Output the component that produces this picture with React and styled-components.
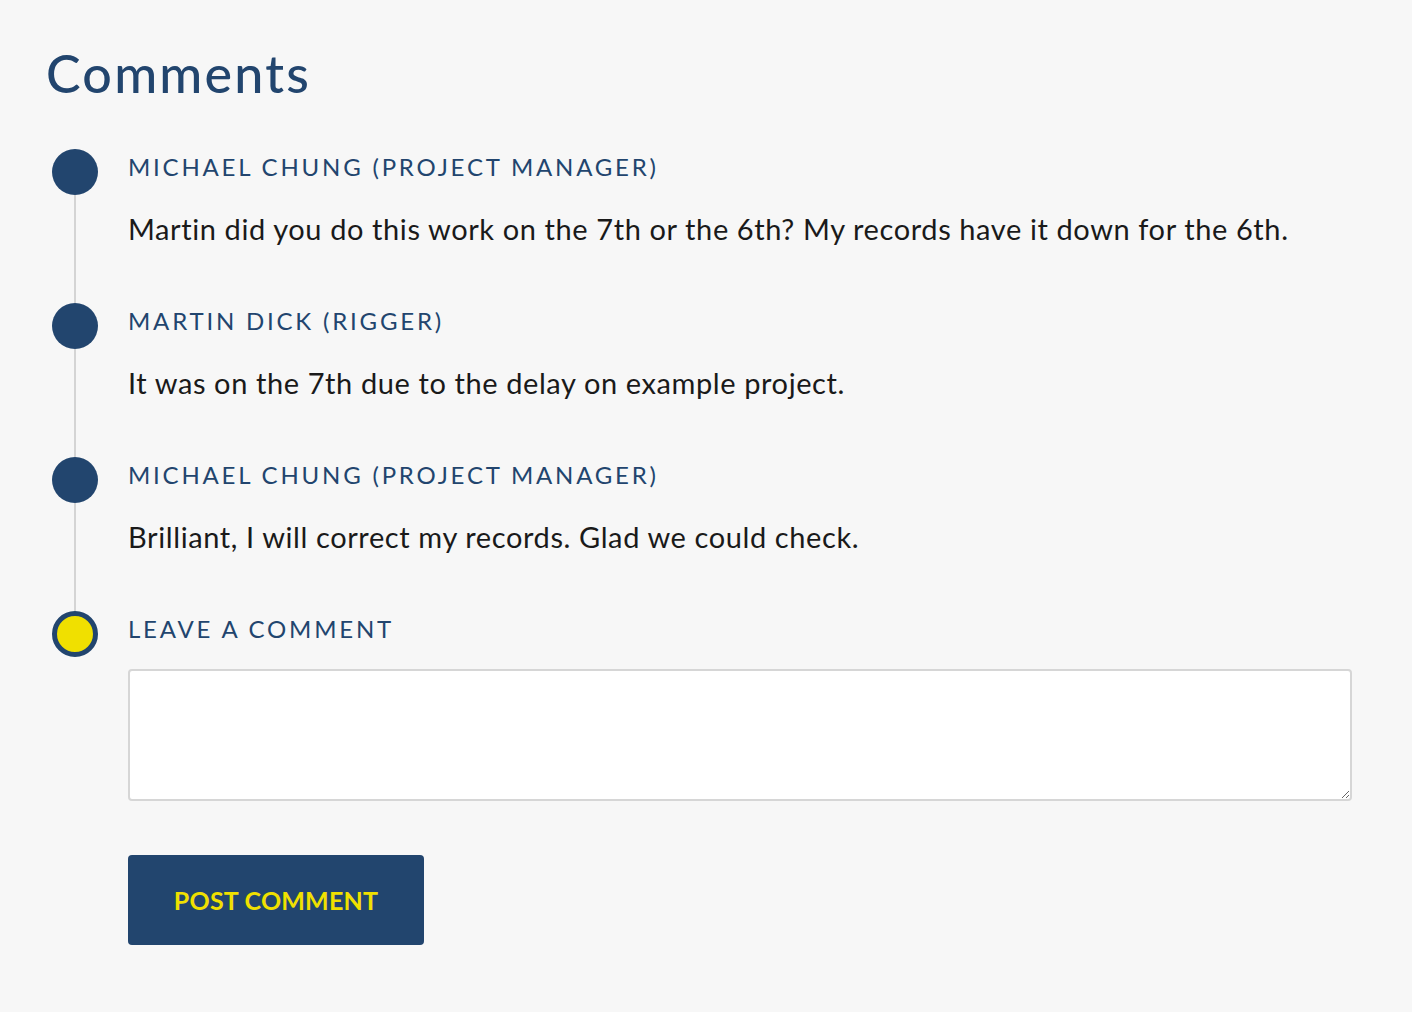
import React from "react";
import styled, { createGlobalStyle } from "styled-components";

const GlobalStyle = createGlobalStyle`
  html, body {
    margin: 0;
    background: #f7f7f7;
  }
  body {
    font-family: Lato, "Open Sans", sans-serif;
  }
`;

const navy = "#22456e";
const yellow = "#f0e000";

const Page = styled.div`
  padding: 42px 60px 40px 46px;
  min-height: 100vh;
  box-sizing: border-box;
`;

const Title = styled.h1`
  margin: 0 0 45px;
  font-size: 52px;
  line-height: 62px;
  font-weight: 500;
  letter-spacing: 2.2px;
  color: ${navy};
`;

const Timeline = styled.div`
  display: flex;
  flex-direction: column;
  padding-left: 6px;
`;

const Item = styled.div`
  display: grid;
  grid-template-columns: 46px 1fr;
  column-gap: 30px;
`;

const Marker = styled.div`
  display: flex;
  flex-direction: column;
  align-items: center;
`;

const Dot = styled.div`
  width: 46px;
  height: 46px;
  border-radius: 50%;
  box-sizing: border-box;
  background: ${(p) => (p.$open ? yellow : navy)};
  border: ${(p) => (p.$open ? `5px solid ${navy}` : "none")};
  flex-shrink: 0;
`;

const Rail = styled.div`
  flex: 1;
  width: 2px;
  background: #d4d4d4;
`;

const Content = styled.div`
  padding-bottom: ${(p) => (p.$last ? "0" : "56px")};
`;

const Name = styled.div`
  font-size: 24px;
  line-height: 36px;
  letter-spacing: 2.8px;
  text-transform: uppercase;
  color: ${navy};
`;

const Body = styled.p`
  margin: 26px 0 0;
  font-size: 29px;
  line-height: 36px;
  letter-spacing: 0.6px;
  color: #1a1a1a;
`;

const TextArea = styled.textarea`
  display: block;
  margin-top: 22px;
  width: 100%;
  height: 132px;
  box-sizing: border-box;
  border: 2px solid #d6d6d6;
  border-radius: 4px;
  background: #fff;
  font: inherit;
  font-size: 20px;
  padding: 10px;
`;

const Button = styled.button`
  margin-top: 54px;
  width: 296px;
  height: 90px;
  border: none;
  border-radius: 4px;
  background: ${navy};
  color: ${yellow};
  font-family: Lato, sans-serif;
  font-weight: 700;
  font-size: 25px;
  letter-spacing: 0.2px;
  text-transform: uppercase;
  cursor: pointer;
`;

const comments = [
  {
    name: "Michael Chung (Project Manager)",
    text: "Martin did you do this work on the 7th or the 6th? My records have it down for the 6th.",
  },
  {
    name: "Martin Dick (Rigger)",
    text: "It was on the 7th due to the delay on example project.",
  },
  {
    name: "Michael Chung (Project Manager)",
    text: "Brilliant, I will correct my records. Glad we could check.",
  },
];

export default function App() {
  return (
    <>
      <GlobalStyle />
      <Page>
        <Title>Comments</Title>
        <Timeline>
          {comments.map((c, i) => (
            <Item key={i}>
              <Marker>
                <Dot />
                <Rail />
              </Marker>
              <Content>
                <Name>{c.name}</Name>
                <Body>{c.text}</Body>
              </Content>
            </Item>
          ))}
          <Item>
            <Marker>
              <Dot $open />
            </Marker>
            <Content $last>
              <Name>Leave a comment</Name>
              <TextArea />
              <Button>Post comment</Button>
            </Content>
          </Item>
        </Timeline>
      </Page>
    </>
  );
}
